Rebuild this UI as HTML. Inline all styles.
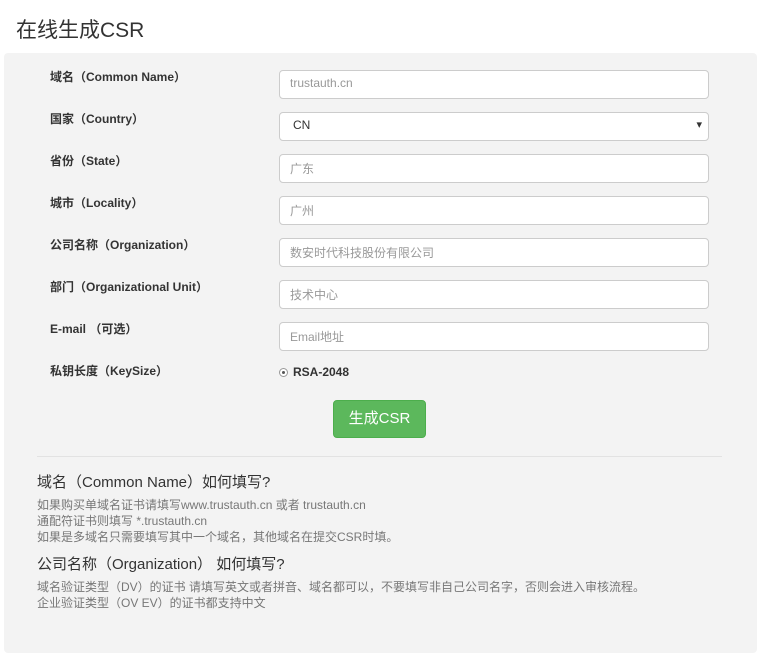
<!DOCTYPE html>
<html><head><meta charset="utf-8"><style>
*{box-sizing:border-box;margin:0;padding:0}
body{width:768px;height:637px;background:#fff;font-family:"Liberation Sans","Noto Sans CJK SC",sans-serif;color:#333;position:relative;overflow:hidden}
.t{position:absolute;left:16px;top:14px;font-size:21px;color:#333}
.panel{position:absolute;left:4px;top:53px;width:753px;height:600px;background:#f3f3f3;border-radius:4px}
.l{position:absolute;left:50px;font-size:12px;font-weight:bold;color:#333}
.i{position:absolute;left:279px;width:430px;height:29px;background:#fff;border:1px solid #ccc;border-radius:4px;font-size:12px;color:#999;padding:5px 10px}
.sel{color:#333;padding-left:13px}
.sel:after{content:"▾";position:absolute;right:6px;top:5px;font-size:11px;color:#333}
.btn{position:absolute;left:333px;top:400px;width:93px;height:38px;background:#5cb85c;border:1px solid #4cae4c;border-radius:4px;color:#fff;font-size:15px;text-align:center;line-height:36px}
.hr{position:absolute;left:37px;top:456px;width:685px;border-top:1px solid #e2e2e2}
.h{position:absolute;left:37px;font-size:15px;color:#333}
.p{position:absolute;left:37px;font-size:12px;color:#777;line-height:16px}
</style></head><body>
<div class="t">在线生成CSR</div>
<div class="panel"></div>
<div class="l" style="top:68px">域名（Common Name）</div>
<div class="i" style="top:70px">trustauth.cn</div>
<div class="l" style="top:110px">国家（Country）</div>
<div class="i sel" style="top:112px">CN</div>
<div class="l" style="top:152px">省份（State）</div>
<div class="i" style="top:154px">广东</div>
<div class="l" style="top:194px">城市（Locality）</div>
<div class="i" style="top:196px">广州</div>
<div class="l" style="top:236px">公司名称（Organization）</div>
<div class="i" style="top:238px">数安时代科技股份有限公司</div>
<div class="l" style="top:278px">部门（Organizational Unit）</div>
<div class="i" style="top:280px">技术中心</div>
<div class="l" style="top:320px">E-mail （可选）</div>
<div class="i" style="top:322px">Email地址</div>
<div class="l" style="top:362px">私钥长度（KeySize）</div>
<div style="position:absolute;left:279px;top:368px;width:9px;height:9px;border:1px solid #999;border-radius:50%;background:#fff"><div style="margin:2px;width:3px;height:3px;border-radius:50%;background:#555"></div></div>
<div class="l" style="left:293px;top:365px">RSA-2048</div>
<div class="btn">生成CSR</div>
<div class="hr"></div>
<div class="h" style="top:471px">域名（Common Name）如何填写?</div>
<div class="p" style="top:497px">如果购买单域名证书请填写www.trustauth.cn 或者 trustauth.cn<br>通配符证书则填写 *.trustauth.cn<br>如果是多域名只需要填写其中一个域名，其他域名在提交CSR时填。</div>
<div class="h" style="top:553px">公司名称（Organization） 如何填写?</div>
<div class="p" style="top:579px">域名验证类型（DV）的证书 请填写英文或者拼音、域名都可以，不要填写非自己公司名字，否则会进入审核流程。<br>企业验证类型（OV EV）的证书都支持中文</div>
</body></html>
